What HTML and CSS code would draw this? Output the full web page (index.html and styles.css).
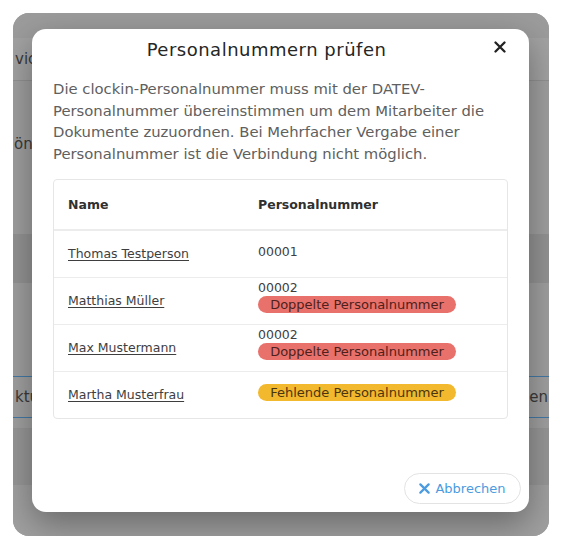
FILE: index.html
```html
<!DOCTYPE html>
<html lang="de">
<head>
    <meta charset="UTF-8">
    <title>Personalnummern prüfen</title>
    <link rel="stylesheet" href="styles.css">
</head>
<body>
    <div class="frame">
        <div class="app">
            <div class="app-top"></div>
            <div class="app-row app-row-head"><span class="frag">vic</span></div>
            <div class="app-block"><span class="frag second">önr</span></div>
            <div class="app-band"></div>
            <div class="app-block short"></div>
            <div class="app-tabs">
                <span class="frag">ktu</span>
                <span class="frag right">hen</span>
            </div>
            <div class="app-gap"></div>
            <div class="app-band low"></div>
            <div class="app-bottom"></div>
        </div>

        <div class="modal">
            <div class="modal-header">
                <h2>Personalnummern prüfen</h2>
                <button class="close" aria-label="Schließen">
                    <svg width="12" height="12" viewBox="0 0 12 12"><path d="M1.5 1.5l9 9M10.5 1.5l-9 9" stroke="#222" stroke-width="2.3" stroke-linecap="round"/></svg>
                </button>
            </div>

            <p class="intro">Die clockin-Personalnummer muss mit der DATEV-Personalnummer übereinstimmen um dem Mitarbeiter die Dokumente zuzuordnen. Bei Mehrfacher Vergabe einer Personalnummer ist die Verbindung nicht möglich.</p>

            <table class="check">
                <thead>
                    <tr><th>Name</th><th>Personalnummer</th></tr>
                </thead>
                <tbody>
                    <tr>
                        <td><a href="#">Thomas Testperson</a></td>
                        <td class="pn"><div class="num">00001</div></td>
                    </tr>
                    <tr>
                        <td><a href="#">Matthias Müller</a></td>
                        <td class="pn stacked"><div class="num">00002</div><span class="badge red">Doppelte Personalnummer</span></td>
                    </tr>
                    <tr>
                        <td><a href="#">Max Mustermann</a></td>
                        <td class="pn stacked"><div class="num">00002</div><span class="badge red">Doppelte Personalnummer</span></td>
                    </tr>
                    <tr>
                        <td><a href="#">Martha Musterfrau</a></td>
                        <td class="pn"><span class="badge yellow">Fehlende Personalnummer</span></td>
                    </tr>
                </tbody>
            </table>

            <div class="modal-footer">
                <button class="cancel">
                    <svg width="11" height="11" viewBox="0 0 12 12"><path d="M1.5 1.5l9 9M10.5 1.5l-9 9" stroke="#4a9be0" stroke-width="2.4" stroke-linecap="round"/></svg>
                    Abbrechen
                </button>
            </div>
        </div>
    </div>
</body>
</html>
```

FILE: styles.css
```css
body {
    margin: 0;
    background: #fff;
    font-family: 'DejaVu Sans', sans-serif;
}

.frame {
    position: relative;
    margin: 13px;
    width: 536px;
    height: 523px;
    border-radius: 16px;
    overflow: hidden;
    background: #9e9e9e;
}

/* dimmed app behind the dialog */
.app {
    display: flex;
    flex-direction: column;
    height: 100%;
    color: #3a3a3a;
    font-size: 15px;
}

.app-top {
    height: 25px;
    background: #9c9c9c;
}

.app-row-head {
    height: 42px;
    background: #a2a2a2;
    border-bottom: 1px solid #919191;
    display: flex;
    align-items: center;
}

.app-block {
    height: 153px;
    background: #9f9f9f;
    display: flex;
    align-items: flex-start;
}

.app-block.short {
    height: 93px;
}

.frag {
    padding-left: 2px;
}

.frag.second {
    margin-top: 54px;
    padding-left: 1px;
}

.frag.right {
    padding: 0 1px 0 0;
}

.app-band {
    height: 49px;
    background: #939393;
}

.app-tabs {
    height: 40px;
    background: #a0a0a0;
    border-top: 1px solid #4379a6;
    border-bottom: 1px solid #4379a6;
    display: flex;
    align-items: center;
    justify-content: space-between;
}

.app-gap {
    height: 10px;
    background: #a0a0a0;
    border-bottom: 1px solid #969696;
}

.app-band.low {
    height: 56px;
    background: #979797;
}

.app-bottom {
    flex: 1;
    background: #a0a0a0;
}

/* dialog */
.modal {
    position: absolute;
    left: 19px;
    top: 16px;
    width: 497px;
    height: 483px;
    box-sizing: border-box;
    padding: 0 21px;
    background: #fff;
    border-radius: 14px;
    box-shadow: 0 12px 34px rgba(0, 0, 0, 0.35);
    display: flex;
    flex-direction: column;
}

.modal-header {
    position: relative;
    height: 40px;
    padding-right: 28px;
    display: flex;
    align-items: center;
    justify-content: center;
}

.modal-header h2 {
    margin: 0;
    font-size: 18px;
    font-weight: normal;
    color: #262626;
    letter-spacing: 0.5px;
}

.close {
    position: absolute;
    right: 2px;
    top: 12px;
    padding: 0;
    border: none;
    background: none;
    width: 12px;
    height: 12px;
    display: flex;
}

.intro {
    margin: 9px 0 14px;
    font-size: 14.8px;
    line-height: 21.7px;
    color: #606060;
}

.check {
    width: 100%;
    border-collapse: separate;
    border-spacing: 0;
    border: 1px solid #e6e6e6;
    border-radius: 4px;
    font-size: 12.5px;
    color: #3e3e3e;
}

.check th {
    height: 49px;
    text-align: left;
    font-weight: 600;
    color: #303030;
    padding: 0 14px;
    border-bottom: 2px solid #ececec;
}

.check th:first-child {
    width: 162px;
}

.check td {
    height: 46px;
    padding: 0 14px;
    border-bottom: 1px solid #ececec;
    vertical-align: middle;
}

.check td.pn {
    padding-bottom: 5px;
    height: 41px;
}

.check td.pn.stacked {
    padding-bottom: 9px;
    height: 37px;
}

.check tbody tr:last-child td {
    border-bottom: none;
}

.check a {
    color: #3e3e3e;
    text-decoration: underline;
    text-underline-offset: 2px;
}

.num {
    line-height: 15px;
}

.badge {
    display: inline-block;
    margin-top: 1px;
    width: 198px;
    box-sizing: border-box;
    height: 17px;
    line-height: 17px;
    text-align: center;
    border-radius: 9px;
    font-size: 13px;
}

.badge.red {
    background: #e8716b;
    color: #4e1f1c;
}

.badge.yellow {
    background: #f2b92e;
    color: #4a3510;
}

.modal-footer {
    margin-top: auto;
    margin-right: -13px;
    margin-bottom: 8px;
    display: flex;
    justify-content: flex-end;
}

.cancel {
    width: 117px;
    height: 31px;
    border: 1px solid #e3e3e3;
    border-radius: 16px;
    background: #fff;
    color: #4a9be0;
    font-family: 'DejaVu Sans', sans-serif;
    font-size: 13px;
    display: flex;
    align-items: center;
    justify-content: center;
    gap: 5px;
    cursor: pointer;
}
```
